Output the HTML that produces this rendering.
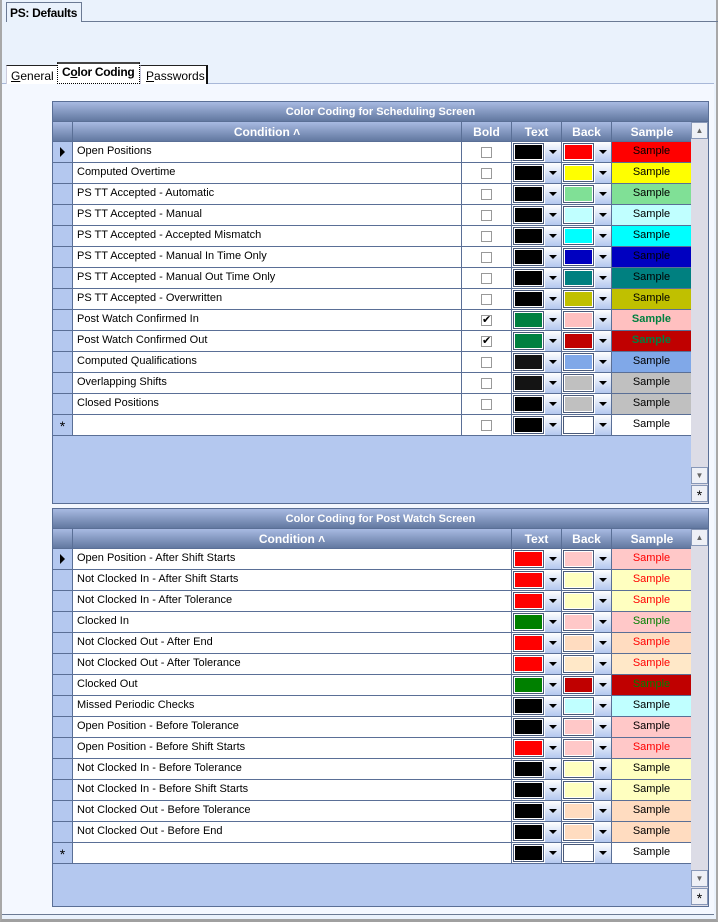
<!DOCTYPE html><html><head><style>
*{box-sizing:border-box;margin:0;padding:0}
body{width:718px;height:922px;background:#a0a0a0;font-family:"Liberation Sans",sans-serif;font-size:11px;position:relative;overflow:hidden}
.frame{position:absolute;left:0;top:0;width:718px;height:922px;background:#eaf2fc;border-left:2px solid #a8a8a8;border-right:2px solid #a8a8a8;border-bottom:3px solid #a0a0a0}
.ttab{position:absolute;left:6px;top:2px;width:76px;height:20px;background:#eaf2fc;border:1px solid #6b7a94;border-bottom:none;font-weight:bold;padding:3px 0 0 3px;font-size:12px;white-space:nowrap;letter-spacing:-0.3px}
.tline{position:absolute;left:82px;right:0;top:21px;border-top:1px solid #6b7a94}
.tab{position:absolute;height:19px;background:#fff;border:1px solid #222;border-left:1px solid #ccd;border-bottom:none;padding:3px 0 0 5px;white-space:nowrap;font-size:12px}
.panel{position:absolute;left:2px;top:83px;width:712px;height:832px;background:#f4f8ff;border-top:1px solid #a8b8d8;border-bottom:1px solid #6b7a94}
.grid{position:absolute;left:52px;width:657px;background:#b4c8ef;border:1px solid #5a6f96}
.cap{height:20px;background:linear-gradient(#a8bae2,#6278a0);color:#fff;font-weight:bold;text-align:center;line-height:20px;border-bottom:1px solid #5a6f96;font-size:11px}
.row{display:flex;height:21px;border-bottom:1px solid #5a6f96;width:639px;background:#fff}
.row>div{border-right:1px solid #5a6f96;height:20px;position:relative}
.hdr{background:linear-gradient(#a8bae2,#6278a0);color:#fff;font-weight:bold;height:20px;font-size:12px}
.hdr>div{text-align:center;line-height:20px;height:19px}
.sel{width:20px;background:#b4c8ef}
.arr:after{content:"";position:absolute;left:7px;top:5px;border-top:5px solid transparent;border-bottom:5px solid transparent;border-left:5px solid #000}
.cond{padding-left:4px;line-height:19px;color:#000}
.chk{display:flex;align-items:center;justify-content:center}
.chk span{width:11px;height:11px;border:1px solid #999;background:#fff;font-size:11px;line-height:9px;text-align:center}
.sw{width:50px}
.sw i{position:absolute;left:1px;top:1px;width:31px;height:18px;border:1px solid #4a5a7a;box-shadow:inset 0 0 0 1px #fff}
.sw b{position:absolute;left:33px;top:0;width:16px;height:20px;background:linear-gradient(#fff,#b4c8ef)}
.sw b:after{content:"";position:absolute;left:4px;top:8px;border-left:4px solid transparent;border-right:4px solid transparent;border-top:4px solid #000}
.smp{width:80px;text-align:center;line-height:19px}
.scr{position:absolute;right:0;top:20px;width:17px;bottom:0;background:#dcdce6}
.sb{position:absolute;left:0;width:17px;height:17px;border:1px solid #8898b8;background:#eef0f6;text-align:center;font-size:8px;color:#666;line-height:15px}
.new{text-align:center;font-size:14px;line-height:22px}
</style></head><body>
<div class="frame"></div>
<div class="ttab">PS: Defaults</div><div class="tline"></div>
<div class="panel"></div>
<div class="tab" style="left:6px;top:65px;width:51px;border-left:1px solid #ccd;border-right:none;padding-left:4px"><u>G</u>eneral</div>
<div class="tab" style="left:57px;top:62px;width:83px;height:22px;font-weight:bold;border:1px dotted #000;border-top:2px solid #444;padding:1px 0 0 4px;letter-spacing:-0.3px">C<u>o</u>lor Coding</div>
<div class="tab" style="left:140px;top:65px;width:68px;border-right:2px solid #111"><u>P</u>asswords</div>

<div class="grid" style="top:101px;height:403px">
<div class="cap">Color Coding for Scheduling Screen</div>
<div class="row hdr"><div class="sel" style="background:none"></div><div style="width:389px">Condition ˄</div><div style="width:50px">Bold</div><div style="width:50px">Text</div><div style="width:50px">Back</div><div style="width:80px;border:none">Sample</div></div>
<div class="row"><div class="sel arr"></div><div class="cond" style="width:389px">Open Positions</div><div class="chk" style="width:50px"><span></span></div><div class="sw"><i style="background:#000"></i><b></b></div><div class="sw"><i style="background:#f00"></i><b></b></div><div class="smp" style="background:#f00">Sample</div></div>
<div class="row"><div class="sel"></div><div class="cond" style="width:389px">Computed Overtime</div><div class="chk" style="width:50px"><span></span></div><div class="sw"><i style="background:#000"></i><b></b></div><div class="sw"><i style="background:#ff0"></i><b></b></div><div class="smp" style="background:#ff0">Sample</div></div>
<div class="row"><div class="sel"></div><div class="cond" style="width:389px">PS TT Accepted - Automatic</div><div class="chk" style="width:50px"><span></span></div><div class="sw"><i style="background:#000"></i><b></b></div><div class="sw"><i style="background:#80e096"></i><b></b></div><div class="smp" style="background:#80e096">Sample</div></div>
<div class="row"><div class="sel"></div><div class="cond" style="width:389px">PS TT Accepted - Manual</div><div class="chk" style="width:50px"><span></span></div><div class="sw"><i style="background:#000"></i><b></b></div><div class="sw"><i style="background:#c0ffff"></i><b></b></div><div class="smp" style="background:#c0ffff">Sample</div></div>
<div class="row"><div class="sel"></div><div class="cond" style="width:389px">PS TT Accepted - Accepted Mismatch</div><div class="chk" style="width:50px"><span></span></div><div class="sw"><i style="background:#000"></i><b></b></div><div class="sw"><i style="background:#0ff"></i><b></b></div><div class="smp" style="background:#0ff">Sample</div></div>
<div class="row"><div class="sel"></div><div class="cond" style="width:389px">PS TT Accepted - Manual In Time Only</div><div class="chk" style="width:50px"><span></span></div><div class="sw"><i style="background:#000"></i><b></b></div><div class="sw"><i style="background:#0000c0"></i><b></b></div><div class="smp" style="background:#0000c0">Sample</div></div>
<div class="row"><div class="sel"></div><div class="cond" style="width:389px">PS TT Accepted - Manual Out Time Only</div><div class="chk" style="width:50px"><span></span></div><div class="sw"><i style="background:#000"></i><b></b></div><div class="sw"><i style="background:#008080"></i><b></b></div><div class="smp" style="background:#008080">Sample</div></div>
<div class="row"><div class="sel"></div><div class="cond" style="width:389px">PS TT Accepted - Overwritten</div><div class="chk" style="width:50px"><span></span></div><div class="sw"><i style="background:#000"></i><b></b></div><div class="sw"><i style="background:#c0c000"></i><b></b></div><div class="smp" style="background:#c0c000">Sample</div></div>
<div class="row"><div class="sel"></div><div class="cond" style="width:389px">Post Watch Confirmed In</div><div class="chk" style="width:50px"><span>✔</span></div><div class="sw"><i style="background:#008040"></i><b></b></div><div class="sw"><i style="background:#ffc0c0"></i><b></b></div><div class="smp" style="background:#ffc0c0;color:#008040;font-weight:bold">Sample</div></div>
<div class="row"><div class="sel"></div><div class="cond" style="width:389px">Post Watch Confirmed Out</div><div class="chk" style="width:50px"><span>✔</span></div><div class="sw"><i style="background:#008040"></i><b></b></div><div class="sw"><i style="background:#c00000"></i><b></b></div><div class="smp" style="background:#c00000;color:#008040;font-weight:bold">Sample</div></div>
<div class="row"><div class="sel"></div><div class="cond" style="width:389px">Computed Qualifications</div><div class="chk" style="width:50px"><span></span></div><div class="sw"><i style="background:#141414"></i><b></b></div><div class="sw"><i style="background:#80a8e8"></i><b></b></div><div class="smp" style="background:#80a8e8">Sample</div></div>
<div class="row"><div class="sel"></div><div class="cond" style="width:389px">Overlapping Shifts</div><div class="chk" style="width:50px"><span></span></div><div class="sw"><i style="background:#141414"></i><b></b></div><div class="sw"><i style="background:#c0c0c0"></i><b></b></div><div class="smp" style="background:#c0c0c0">Sample</div></div>
<div class="row"><div class="sel"></div><div class="cond" style="width:389px">Closed Positions</div><div class="chk" style="width:50px"><span></span></div><div class="sw"><i style="background:#000"></i><b></b></div><div class="sw"><i style="background:#c0c0c0"></i><b></b></div><div class="smp" style="background:#c0c0c0">Sample</div></div>
<div class="row"><div class="sel new">*</div><div class="cond" style="width:389px"></div><div class="chk" style="width:50px"><span></span></div><div class="sw"><i style="background:#000"></i><b></b></div><div class="sw"><i style="background:#fff"></i><b></b></div><div class="smp" style="background:#fff">Sample</div></div>
<div class="scr"><div class="sb" style="top:0">▲</div><div class="sb" style="bottom:19px">▼</div><div class="sb" style="bottom:1px;color:#000;font-size:14px;line-height:19px">*</div></div>
</div>

<div class="grid" style="top:508px;height:399px">
<div class="cap">Color Coding for Post Watch Screen</div>
<div class="row hdr"><div class="sel" style="background:none"></div><div style="width:439px">Condition ˄</div><div style="width:50px">Text</div><div style="width:50px">Back</div><div style="width:80px;border:none">Sample</div></div>
<div class="row"><div class="sel arr"></div><div class="cond" style="width:439px">Open Position - After Shift Starts</div><div class="sw"><i style="background:#f00"></i><b></b></div><div class="sw"><i style="background:#ffc8c8"></i><b></b></div><div class="smp" style="background:#ffc8c8;color:#f00">Sample</div></div>
<div class="row"><div class="sel"></div><div class="cond" style="width:439px">Not Clocked In - After Shift Starts</div><div class="sw"><i style="background:#f00"></i><b></b></div><div class="sw"><i style="background:#ffffc0"></i><b></b></div><div class="smp" style="background:#ffffc0;color:#f00">Sample</div></div>
<div class="row"><div class="sel"></div><div class="cond" style="width:439px">Not Clocked In - After Tolerance</div><div class="sw"><i style="background:#f00"></i><b></b></div><div class="sw"><i style="background:#ffffc0"></i><b></b></div><div class="smp" style="background:#ffffc0;color:#f00">Sample</div></div>
<div class="row"><div class="sel"></div><div class="cond" style="width:439px">Clocked In</div><div class="sw"><i style="background:#008000"></i><b></b></div><div class="sw"><i style="background:#ffc8c8"></i><b></b></div><div class="smp" style="background:#ffc8c8;color:#008000">Sample</div></div>
<div class="row"><div class="sel"></div><div class="cond" style="width:439px">Not Clocked Out - After End</div><div class="sw"><i style="background:#f00"></i><b></b></div><div class="sw"><i style="background:#ffdcc0"></i><b></b></div><div class="smp" style="background:#ffdcc0;color:#f00">Sample</div></div>
<div class="row"><div class="sel"></div><div class="cond" style="width:439px">Not Clocked Out - After Tolerance</div><div class="sw"><i style="background:#f00"></i><b></b></div><div class="sw"><i style="background:#ffe8c8"></i><b></b></div><div class="smp" style="background:#ffe8c8;color:#f00">Sample</div></div>
<div class="row"><div class="sel"></div><div class="cond" style="width:439px">Clocked Out</div><div class="sw"><i style="background:#008000"></i><b></b></div><div class="sw"><i style="background:#c00000"></i><b></b></div><div class="smp" style="background:#c00000;color:#008000">Sample</div></div>
<div class="row"><div class="sel"></div><div class="cond" style="width:439px">Missed Periodic Checks</div><div class="sw"><i style="background:#000"></i><b></b></div><div class="sw"><i style="background:#c0ffff"></i><b></b></div><div class="smp" style="background:#c0ffff">Sample</div></div>
<div class="row"><div class="sel"></div><div class="cond" style="width:439px">Open Position - Before Tolerance</div><div class="sw"><i style="background:#000"></i><b></b></div><div class="sw"><i style="background:#ffc8c8"></i><b></b></div><div class="smp" style="background:#ffc8c8">Sample</div></div>
<div class="row"><div class="sel"></div><div class="cond" style="width:439px">Open Position - Before Shift Starts</div><div class="sw"><i style="background:#f00"></i><b></b></div><div class="sw"><i style="background:#ffc8c8"></i><b></b></div><div class="smp" style="background:#ffc8c8;color:#f00">Sample</div></div>
<div class="row"><div class="sel"></div><div class="cond" style="width:439px">Not Clocked In - Before Tolerance</div><div class="sw"><i style="background:#000"></i><b></b></div><div class="sw"><i style="background:#ffffc0"></i><b></b></div><div class="smp" style="background:#ffffc0">Sample</div></div>
<div class="row"><div class="sel"></div><div class="cond" style="width:439px">Not Clocked In - Before Shift Starts</div><div class="sw"><i style="background:#000"></i><b></b></div><div class="sw"><i style="background:#ffffc0"></i><b></b></div><div class="smp" style="background:#ffffc0">Sample</div></div>
<div class="row"><div class="sel"></div><div class="cond" style="width:439px">Not Clocked Out - Before Tolerance</div><div class="sw"><i style="background:#000"></i><b></b></div><div class="sw"><i style="background:#ffdcc0"></i><b></b></div><div class="smp" style="background:#ffdcc0">Sample</div></div>
<div class="row"><div class="sel"></div><div class="cond" style="width:439px">Not Clocked Out - Before End</div><div class="sw"><i style="background:#000"></i><b></b></div><div class="sw"><i style="background:#ffdcc0"></i><b></b></div><div class="smp" style="background:#ffdcc0">Sample</div></div>
<div class="row"><div class="sel new">*</div><div class="cond" style="width:439px"></div><div class="sw"><i style="background:#000"></i><b></b></div><div class="sw"><i style="background:#fff"></i><b></b></div><div class="smp" style="background:#fff">Sample</div></div>
<div class="scr"><div class="sb" style="top:0">▲</div><div class="sb" style="bottom:19px">▼</div><div class="sb" style="bottom:1px;color:#000;font-size:14px;line-height:19px">*</div></div>
</div>
</body></html>
